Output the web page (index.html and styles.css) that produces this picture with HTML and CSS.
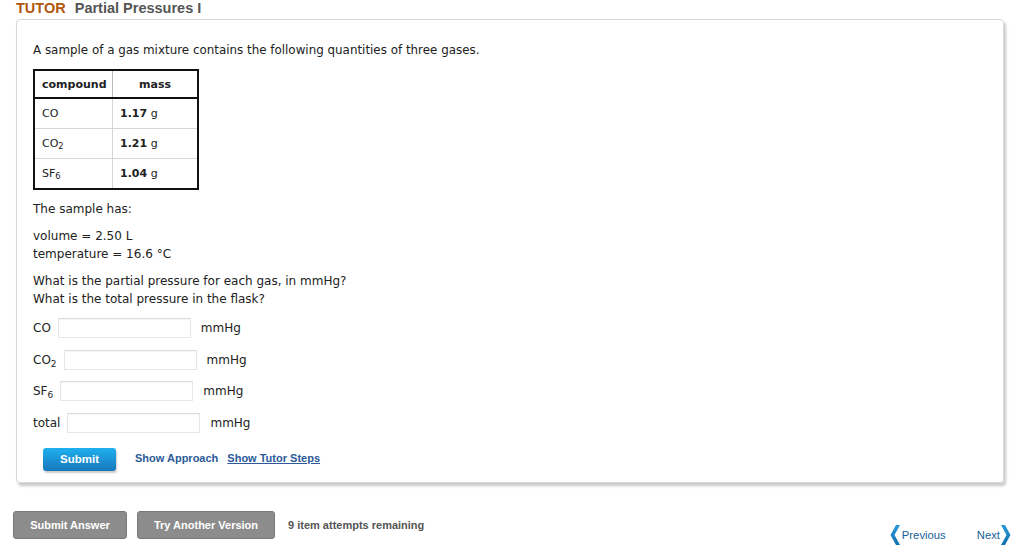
FILE: index.html
```html
<!DOCTYPE html>
<html>
<head>
<meta charset="utf-8">
<link rel="stylesheet" href="styles.css">
</head>
<body>
<div class="title"><span class="tutor">TUTOR</span> <span class="name">Partial Pressures I</span></div>
<div class="card">
  <p class="intro">A sample of a gas mixture contains the following quantities of three gases.</p>
  <table class="data">
    <thead>
      <tr><th class="c1">compound</th><th class="c2">mass</th></tr>
    </thead>
    <tbody>
      <tr><td>CO</td><td><b>1.17</b> g</td></tr>
      <tr><td>CO<sub>2</sub></td><td><b>1.21</b> g</td></tr>
      <tr><td>SF<sub>6</sub></td><td><b>1.04</b> g</td></tr>
    </tbody>
  </table>
  <p class="para">The sample has:</p>
  <p class="para">volume = 2.50 L<br>temperature = 16.6 °C</p>
  <p class="para">What is the partial pressure for each gas, in mmHg?<br>What is the total pressure in the flask?</p>
  <div class="answers">
    <div class="ans"><span class="lbl">CO</span><span class="inp"></span><span class="unit">mmHg</span></div>
    <div class="ans"><span class="lbl">CO<sub>2</sub></span><span class="inp"></span><span class="unit">mmHg</span></div>
    <div class="ans"><span class="lbl">SF<sub>6</sub></span><span class="inp"></span><span class="unit">mmHg</span></div>
    <div class="ans"><span class="lbl">total</span><span class="inp"></span><span class="unit">mmHg</span></div>
  </div>
  <div class="actions">
    <span class="submit">Submit</span>
    <a class="link">Show Approach</a>
    <a class="link under">Show Tutor Steps</a>
  </div>
</div>
<div class="footer">
  <div class="left">
    <span class="gbtn b1">Submit Answer</span>
    <span class="gbtn b2">Try Another Version</span>
    <span class="remain">9 item attempts remaining</span>
  </div>
  <div class="nav">
    <a class="prev"><svg width="11" height="20" viewBox="0 0 11 20"><defs><linearGradient id="gp" x1="0" y1="0" x2="0" y2="1"><stop offset="0" stop-color="#2a9ad8"/><stop offset="1" stop-color="#1170b0"/></linearGradient></defs><polygon points="6,0 10,0 4.5,10 10,20 6,20 0.5,10" fill="url(#gp)"/></svg>Previous</a>
    <a class="next">Next<svg width="11" height="20" viewBox="0 0 11 20"><defs><linearGradient id="gn" x1="0" y1="0" x2="0" y2="1"><stop offset="0" stop-color="#2a9ad8"/><stop offset="1" stop-color="#1170b0"/></linearGradient></defs><polygon points="1,0 5,0 10.5,10 5,20 1,20 6.5,10" fill="url(#gn)"/></svg></a>
  </div>
</div>
</body>
</html>
```
FILE: styles.css
```css
html, body {
  margin: 0;
  padding: 0;
  background: #fff;
}
body {
  font-family: "DejaVu Sans", Verdana, sans-serif;
  color: #222;
}
.title {
  font-family: "Liberation Sans", Arial, sans-serif;
  font-weight: bold;
  font-size: 14.5px;
  line-height: 16px;
  padding-left: 16px;
  height: 19px;
}
.tutor { color: #b0570f; }
.name { color: #555; margin-left: 5px; }
.card {
  margin-left: 16px;
  border: 1px solid #d8d8d8;
  border-radius: 4px;
  box-shadow: 2px 3px 3px rgba(0,0,0,0.22);
  padding: 21px 0 0 16px;
  box-sizing: border-box;
  width: 988px;
  height: 464px;
}
p { margin: 0; }
.intro {
  font-size: 11.9px;
  line-height: 18px;
}
.data {
  margin-top: 10px;
  border-collapse: collapse;
  border: 2px solid #111;
  font-size: 11px;
  color: #222;
}
.data th {
  height: 26px;
  border-bottom: 2px solid #111;
  border-right: 1px solid #bbb;
  font-weight: bold;
  padding: 0 0 0 7px;
  text-align: left;
}
.data th.c1 { width: 70px; }
.data th.c2 { width: 84px; text-align: center; padding: 0; }
.data td {
  height: 29px;
  border-bottom: 1px solid #d6d6d6;
  border-right: 1px solid #d6d6d6;
  padding: 0 0 0 7px;
}
.data sub, .lbl sub {
  font-size: 0.75em;
  vertical-align: -0.3em;
  line-height: 0;
}
.para {
  font-size: 12px;
  line-height: 18px;
  margin-top: 9px;
}
.data + .para { margin-top: 10px; }
.answers {
  margin-top: 9px;
  display: flex;
  flex-direction: column;
  gap: 9.5px;
}
.ans {
  display: flex;
  align-items: center;
  height: 22px;
  font-size: 12px;
}
.lbl { margin-right: 7px; }
.inp {
  width: 133px;
  height: 20px;
  border: 1px solid #e6e6e6;
  border-top-color: #dcdcdc;
  box-sizing: border-box;
  box-shadow: inset 0 1px 1px rgba(0,0,0,0.04);
  background: #fff;
}
.unit { margin-left: 10px; }
.actions {
  margin-top: 12px;
  display: flex;
  align-items: center;
  font-family: "Liberation Sans", Arial, sans-serif;
  font-weight: bold;
  font-size: 11px;
  padding-left: 10px;
}
.submit {
  width: 73px;
  height: 23px;
  border-radius: 3px;
  background: linear-gradient(#1fb0ef, #1777bb);
  color: #fff;
  display: flex;
  align-items: center;
  justify-content: center;
  box-shadow: 1px 2px 2px rgba(0,0,0,0.2);
  font-size: 11.5px;
  margin-top: 2px;
}
.link {
  color: #2c5a98;
  margin-left: 19px;
}
.link.under {
  margin-left: 9px;
  text-decoration: underline;
}
.footer {
  margin-top: 28px;
  display: flex;
  justify-content: space-between;
  align-items: flex-start;
  font-family: "Liberation Sans", Arial, sans-serif;
}
.left {
  display: flex;
  align-items: center;
  padding-left: 13px;
}
.gbtn {
  height: 28px;
  box-sizing: border-box;
  background: #8c8c8c;
  border: 1px solid #7a7a7a;
  border-radius: 3px;
  color: #fff;
  font-weight: bold;
  font-size: 11px;
  display: flex;
  align-items: center;
  justify-content: center;
}
.b1 { width: 114px; }
.b2 { width: 138px; margin-left: 10px; }
.remain {
  margin-left: 13px;
  color: #555;
  font-weight: bold;
  font-size: 11px;
}
.nav {
  display: flex;
  align-items: center;
  margin-top: 14px;
  padding-right: 13px;
  font-size: 11.3px;
  color: #1a5e98;
}
.nav a { display: flex; align-items: center; }
.prev svg { margin-right: 1px; }
.next { margin-left: 31px; }
.next svg { margin-left: 0px; }
```
